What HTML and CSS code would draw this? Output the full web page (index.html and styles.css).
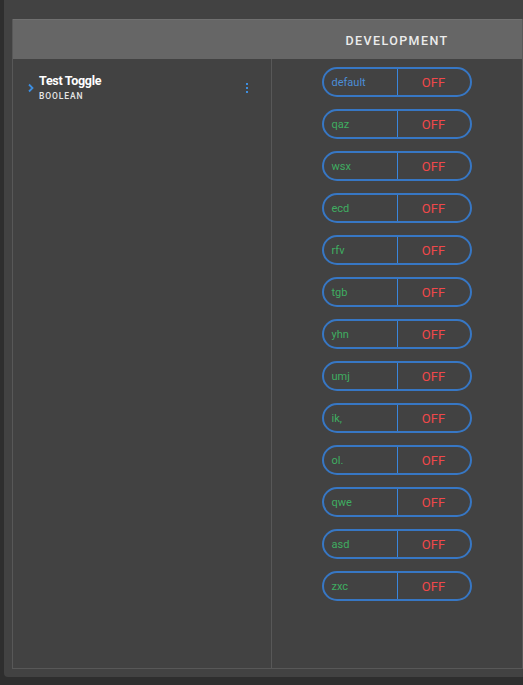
FILE: index.html
```html
<!DOCTYPE html>
<html lang="en">
<head>
    <meta charset="UTF-8">
    <meta name="viewport" content="width=device-width, initial-scale=1.0">
    <title>Feature Toggles</title>
    <link rel="stylesheet" href="styles.css">
</head>
<body>
    <div class="panel">
        <div class="grid">
            <div class="grid-head">
                <div class="head-cell"></div>
                <div class="head-cell env">DEVELOPMENT</div>
            </div>

            <div class="grid-body">
                <!-- toggle name column -->
                <div class="name-col">
                    <div class="toggle-row">
                        <svg class="chevron" width="8" height="10" viewBox="0 0 8 10">
                            <path d="M2 1.5 L5.5 5 L2 8.5" fill="none" stroke="#3d8ee0" stroke-width="1.8"/>
                        </svg>
                        <div class="toggle-name">
                            <div class="title">Test Toggle</div>
                            <div class="type">BOOLEAN</div>
                        </div>
                        <div class="kebab">
                            <span></span><span></span><span></span>
                        </div>
                    </div>
                </div>

                <!-- environment column -->
                <div class="env-col" id="env-col"></div>
            </div>
        </div>
    </div>

    <script>
        const variants = ['default', 'qaz', 'wsx', 'ecd', 'rfv', 'tgb', 'yhn', 'umj', 'ik,', 'ol.', 'qwe', 'asd', 'zxc'];
        const col = document.getElementById('env-col');

        variants.forEach(name => {
            const pill = document.createElement('div');
            pill.className = 'pill';
            pill.innerHTML = `
                <div class="pill-label ${name === 'default' ? 'is-default' : ''}">${name}</div>
                <div class="pill-state">OFF</div>
            `;
            col.appendChild(pill);
        });
    </script>
</body>
</html>
```

FILE: styles.css
```css
* {
    margin: 0;
    padding: 0;
    box-sizing: border-box;
}

body {
    font-family: Roboto, "Liberation Sans", sans-serif;
    background: #2e2e2e;
    height: 685px;
    overflow: hidden;
}

.panel {
    margin-left: 4px;
    height: 677px;
    background: #424242;
    border-bottom-left-radius: 4px;
    padding: 19px 0 0 8px;
}

.grid {
    width: 511px;
    height: 650px;
    border: 1px solid #585858;
    border-top: none;
    display: flex;
    flex-direction: column;
}

.grid-head {
    display: flex;
    height: 40px;
    background: #666666;
    border-top: 1px solid #707070;
}

.head-cell {
    width: 259px;
}

.head-cell.env {
    flex: 1;
    display: flex;
    align-items: center;
    justify-content: center;
    color: #ececec;
    font-size: 12.5px;
    font-weight: 500;
    letter-spacing: 1.4px;
    padding-top: 1px;
}

.grid-body {
    flex: 1;
    display: flex;
}

.name-col {
    width: 259px;
    border-right: 1px solid #585858;
}

.toggle-row {
    display: flex;
    align-items: flex-start;
    padding: 14px 0 0 14px;
}

.chevron {
    margin-top: 10px;
    margin-right: 4px;
}

.toggle-name {
    flex: 1;
}

.title {
    color: #ffffff;
    font-size: 12.5px;
    font-weight: 700;
    letter-spacing: -0.3px;
    line-height: 15px;
}

.type {
    color: #e6e6e6;
    font-size: 8.5px;
    font-weight: 500;
    letter-spacing: 0.9px;
    margin-top: 3px;
}

.kebab {
    display: flex;
    flex-direction: column;
    gap: 2px;
    margin: 10px 23px 0 0;
}

.kebab span {
    width: 2px;
    height: 2px;
    background: #3d8ee0;
}

.env-col {
    flex: 1;
    display: flex;
    flex-direction: column;
    align-items: center;
    gap: 12px;
    padding-top: 8px;
}

.pill {
    display: flex;
    width: 150px;
    height: 30px;
    border: 2px solid #3777c4;
    border-radius: 15px;
    margin-left: -1px;
}

.pill-label {
    width: 74px;
    border-right: 1.5px solid #3a86dc;
    display: flex;
    align-items: center;
    padding-left: 8px;
    font-size: 11px;
    color: #3fae61;
}

.pill-label.is-default {
    color: #4c8ed8;
}

.pill-state {
    flex: 1;
    display: flex;
    align-items: center;
    justify-content: center;
    color: #f0484a;
    font-size: 13px;
    font-weight: 400;
}
```
